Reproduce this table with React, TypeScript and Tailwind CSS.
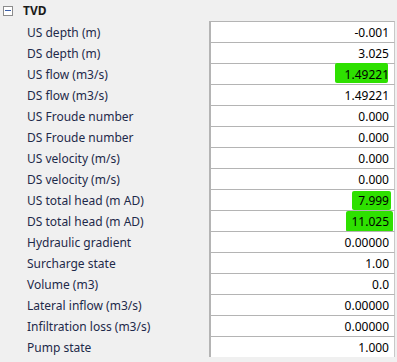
import React from "react";

type Row = { label: string; value: string; hl?: "a" | "b" | "c" };

const rows: Row[] = [
  { label: "US depth (m)", value: "-0.001" },
  { label: "DS depth (m)", value: "3.025" },
  { label: "US flow (m3/s)", value: "1.49221", hl: "a" },
  { label: "DS flow (m3/s)", value: "1.49221" },
  { label: "US Froude number", value: "0.000" },
  { label: "DS Froude number", value: "0.000" },
  { label: "US velocity (m/s)", value: "0.000" },
  { label: "DS velocity (m/s)", value: "0.000" },
  { label: "US total head (m AD)", value: "7.999", hl: "b" },
  { label: "DS total head (m AD)", value: "11.025", hl: "c" },
  { label: "Hydraulic gradient", value: "0.00000" },
  { label: "Surcharge state", value: "1.00" },
  { label: "Volume (m3)", value: "0.0" },
  { label: "Lateral inflow (m3/s)", value: "0.00000" },
  { label: "Infiltration loss (m3/s)", value: "0.00000" },
  { label: "Pump state", value: "1.000" },
];

function Highlight({ kind }: { kind: "a" | "b" | "c" }) {
  if (kind === "a")
    return <span className="absolute right-[6px] top-[-1px] h-[20px] w-[53px] bg-[#2ee000] rounded-[2px]" />;
  if (kind === "b")
    return <span className="absolute right-[3px] top-[1px] h-[19px] w-[39px] bg-[#2ee000] rounded-[2px]" />;
  return <span className="absolute right-[1px] top-[0px] h-[21px] w-[47px] bg-[#2ee000] rounded-[2px]" />;
}

export default function App() {
  return (
    <div
      className="w-[397px] h-[362px] overflow-hidden bg-[#f0f0f0] text-[12px] text-[#000]"
      style={{ fontFamily: '"Noto Sans", "Open Sans", sans-serif' }}
    >
      <div className="h-[21px] flex items-center">
        <div className="ml-[3px] w-[10px] h-[10px] border border-[#8c8c8c] bg-white flex items-center justify-center">
          <div className="w-[6px] h-[1px] bg-[#3c5fa8]" />
        </div>
        <span className="ml-[10px] font-bold text-[#1a1a1a] leading-none">TVD</span>
      </div>
      {rows.map((r) => (
        <div key={r.label} className="flex h-[21px]">
          <div className="w-[209px] pl-[27px] flex items-center pt-[3px] text-[#1e2a4a] whitespace-nowrap">
            {r.label}
          </div>
          <div className="w-[186px] border-l-2 border-l-[#b4b4b4] border-t border-t-[#b4b4b4] border-r border-r-[#c8c8c8] bg-white flex items-center justify-end pr-[5px] pt-[2px] relative">
            {r.hl && <Highlight kind={r.hl} />}
            <span className="relative">{r.value}</span>
          </div>
        </div>
      ))}
    </div>
  );
}
